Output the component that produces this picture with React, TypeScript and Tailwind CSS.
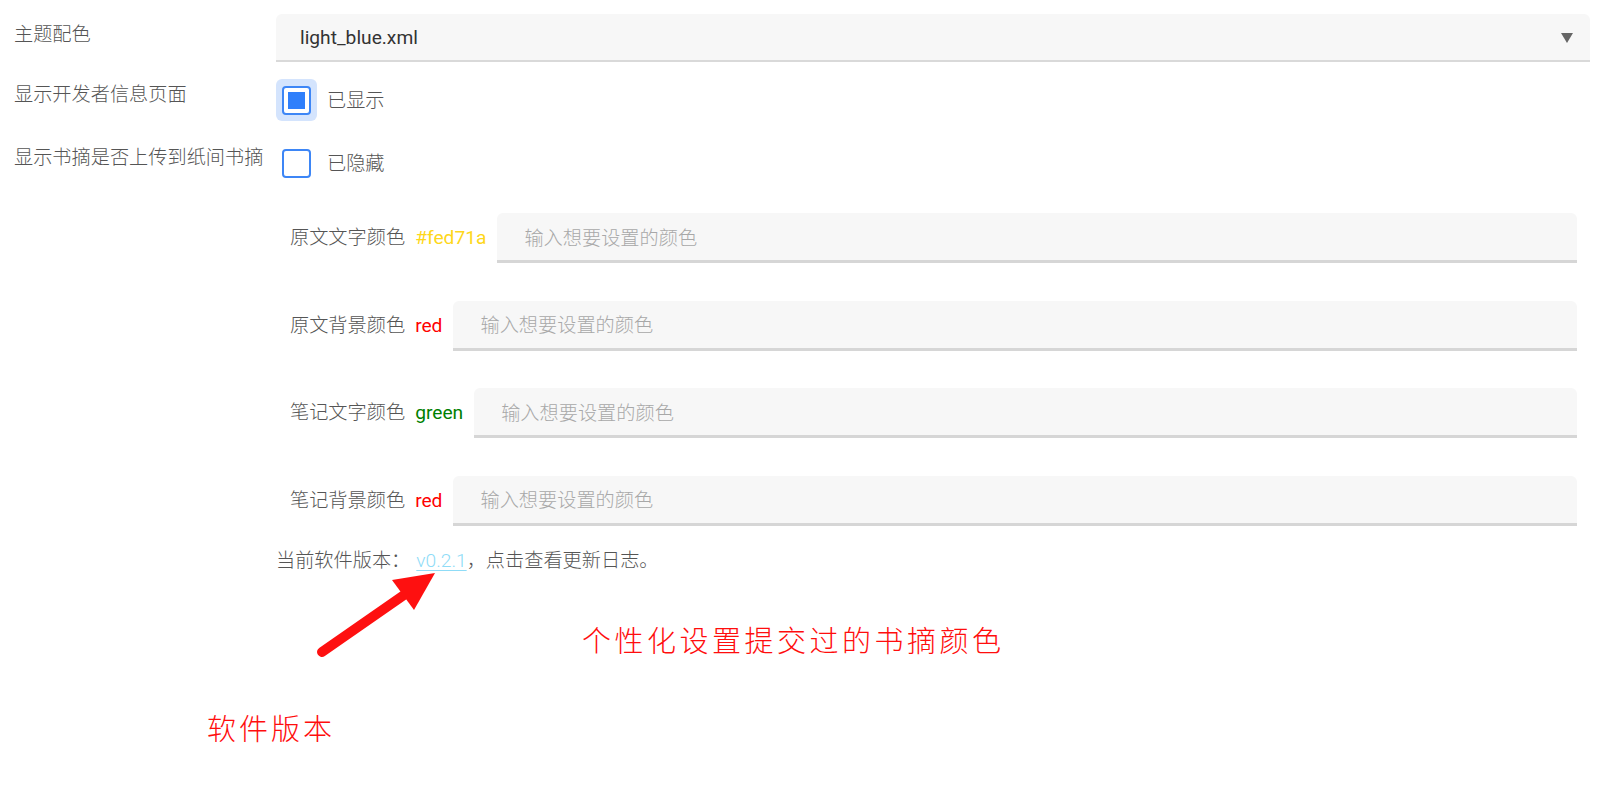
import { useState } from "react";

const FONT = "font-['Roboto','Noto_Sans_CJK_SC',sans-serif]";

interface ColorRowProps {
  label: string;
  value: string;
  valueClass: string;
}

function ColorRow({ label, value, valueClass }: ColorRowProps) {
  return (
    <div className="flex items-center">
      <span className="shrink-0 font-light leading-[30px]">{label}</span>
      <span className={`ml-[10px] shrink-0 leading-[30px] ${valueClass}`}>{value}</span>
      <input
        placeholder="输入想要设置的颜色"
        className="ml-[11px] h-[50px] flex-1 rounded-t-[6px] border-b-[3px] border-[#d6d6d6] bg-[#f7f7f7] pl-[27px] pt-[3px] text-[19.2px] font-light text-[#333] outline-none placeholder:text-[#a8a8a8]"
      />
    </div>
  );
}

function CheckRow({
  label,
  checked,
  text,
  onToggle,
}: {
  label: string;
  checked: boolean;
  text: string;
  onToggle: () => void;
}) {
  return (
    <div className="flex items-start">
      <div className="w-[262px] shrink-0 pt-[1px] font-light leading-[30px]">{label}</div>
      <button type="button" onClick={onToggle} className="flex items-center">
        <span
          className={`flex h-[42px] w-[41px] items-center justify-center rounded-[6px] ${
            checked ? "bg-[#d4e4fd]" : ""
          }`}
        >
          <span className="flex h-[29px] w-[29px] items-center justify-center rounded-[4px] border-2 border-[#3d86f6] bg-white">
            {checked && <span className="h-[17px] w-[17px] bg-[#2f7ffb]" />}
          </span>
        </span>
        <span className="ml-[10px] pt-[2px] font-light leading-[30px] text-[#555]">{text}</span>
      </button>
    </div>
  );
}

export default function App() {
  const [devPage, setDevPage] = useState(true);
  const [upload, setUpload] = useState(false);

  return (
    <div className={`relative h-[811px] w-full bg-white text-[19.2px] text-[#555] ${FONT}`}>
      <div className="flex flex-col pl-[14px] pr-[13px] pt-[14px]">
        {/* theme */}
        <div className="flex items-start">
          <div className="w-[262px] shrink-0 pt-[6px] font-light leading-[30px]">主题配色</div>
          <div className="flex h-[48px] flex-1 items-center justify-between rounded-t-[6px] border-b-2 border-[#d9d9d9] bg-[#f7f7f7] pl-[24px] pr-[17px]">
            <span className="pt-[2px] text-[#333]">light_blue.xml</span>
            <svg width="12" height="10" viewBox="0 0 12 10" className="mt-[2px]">
              <path d="M0 0 L12 0 L6 10 Z" fill="#666" />
            </svg>
          </div>
        </div>

        <div className="mt-[17px]">
          <CheckRow
            label="显示开发者信息页面"
            checked={devPage}
            text={devPage ? "已显示" : "已隐藏"}
            onToggle={() => setDevPage(!devPage)}
          />
        </div>
        <div className="mt-[21px]">
          <CheckRow
            label="显示书摘是否上传到纸间书摘"
            checked={upload}
            text={upload ? "已显示" : "已隐藏"}
            onToggle={() => setUpload(!upload)}
          />
        </div>

        {/* colour settings */}
        <div className="ml-[262px] mt-[29px] flex flex-col gap-[37.5px] pl-[14px] pr-[13px]">
          <ColorRow label="原文文字颜色" value="#fed71a" valueClass="text-[#fed71a]" />
          <ColorRow label="原文背景颜色" value="red" valueClass="text-[red]" />
          <ColorRow label="笔记文字颜色" value="green" valueClass="text-[green]" />
          <ColorRow label="笔记背景颜色" value="red" valueClass="text-[red]" />
        </div>

        <div className="ml-[262px] mt-[20px] leading-[30px]">
          <span className="font-light">当前软件版本：</span>
          <a href="#" className="ml-[6px] font-light text-[#8fdcf7] underline underline-offset-[3px]">
            v0.2.1
          </a>
          <span className="font-light">，点击查看更新日志。</span>
        </div>
      </div>

      {/* annotations */}
      <svg
        className="pointer-events-none absolute left-[300px] top-[560px]"
        width="150"
        height="100"
        viewBox="0 0 150 100"
      >
        <line x1="22" y1="92" x2="104" y2="35" stroke="#fe1010" strokeWidth="10" strokeLinecap="round" />
        <path d="M135 13 L92 20 L114 50 Z" fill="#fe1010" />
      </svg>
      <div className="pointer-events-none absolute left-[582px] top-[623px] text-[29px] font-light leading-[38px] tracking-[3.5px] text-[#ff0d0d]">
        个性化设置提交过的书摘颜色
      </div>
      <div className="pointer-events-none absolute left-[207px] top-[711px] text-[29px] font-light leading-[38px] tracking-[3px] text-[#ff0d0d]">
        软件版本
      </div>
    </div>
  );
}
